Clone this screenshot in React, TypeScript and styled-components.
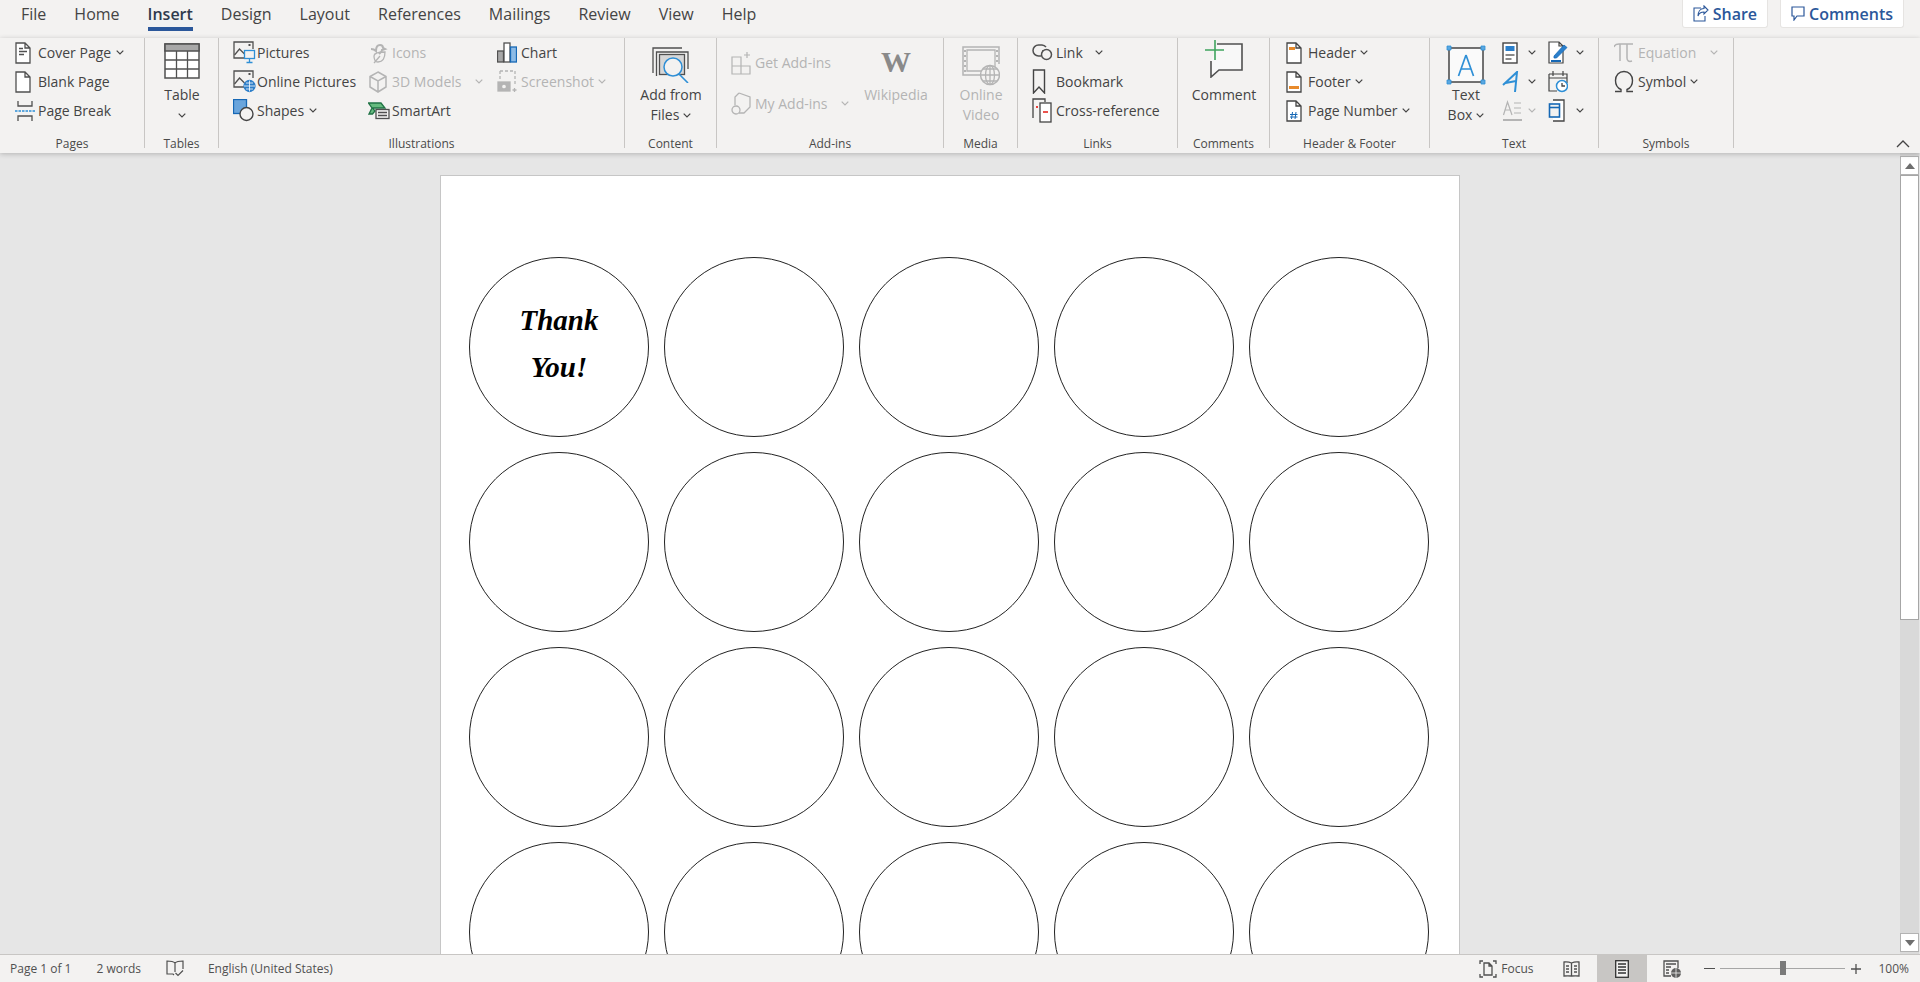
import React from "react";
import styled, { createGlobalStyle } from "styled-components";

const INK = "#505050";
const OFF = "#b4b4b4";
const BLUE = "#2e8fd6";
const DEEP = "#1668b5";

const GlobalStyle = createGlobalStyle`
  html, body {
    margin: 0;
    height: 100%;
    overflow: hidden;
    background: #e6e6e6;
  }
  body {
    font-family: "Open Sans", "Noto Sans", sans-serif;
    color: #444;
  }
`;

const Window = styled.div`
  display: flex;
  flex-direction: column;
  height: 982px;
  width: 1920px;
  overflow: hidden;
`;

const TabBar = styled.div`
  display: flex;
  height: 38px;
  flex: none;
  padding-left: 7px;
  background: #f3f2f1;
  font-size: 16px;
`;

const Tab = styled.div<{ $active?: boolean }>`
  height: 31px;
  margin: 0 14px;
  line-height: 28px;
  box-sizing: border-box;
  color: ${(p) => (p.$active ? "#2f3a4d" : "#444")};
  font-weight: ${(p) => (p.$active ? 600 : 400)};
  border-bottom: 4px solid ${(p) => (p.$active ? "#2b579a" : "transparent")};
`;

const TabActions = styled.div`
  display: flex;
  gap: 12px;
  margin-left: auto;
  margin-right: 16px;
`;

const ActionButton = styled.div`
  display: flex;
  align-items: center;
  gap: 4px;
  height: 28px;
  padding: 0 10px;
  box-sizing: border-box;
  background: #fff;
  border: 1px solid #e6e4e2;
  border-top: none;
  border-radius: 0 0 3px 3px;
  color: #2b579a;
  font-size: 16px;
  font-weight: 600;
`;

const Ribbon = styled.div`
  position: relative;
  z-index: 1;
  display: flex;
  flex: none;
  height: 115px;
  background: #f3f2f1;
  box-shadow: 0 1px 5px rgba(0, 0, 0, 0.22);
`;

const Group = styled.section<{ $w: number }>`
  display: flex;
  flex-direction: column;
  justify-content: space-between;
  flex: none;
  width: ${(p) => p.$w}px;
  box-sizing: border-box;
  background: linear-gradient(#c8c6c4, #c8c6c4) right top / 1px 110px no-repeat;
`;

const GroupBody = styled.div<{ $pad?: number }>`
  display: flex;
  justify-content: ${(p) => (p.$pad === undefined ? "center" : "flex-start")};
  padding-left: ${(p) => p.$pad ?? 0}px;
`;

const GroupLabel = styled.div`
  margin-bottom: 2px;
  padding-right: 1px;
  font-size: 12px;
  line-height: 15px;
  text-align: center;
  color: #4a4a4a;
`;

const Column = styled.div<{ $w?: number; $top?: number }>`
  display: flex;
  flex-direction: column;
  flex: none;
  width: ${(p) => (p.$w ? `${p.$w}px` : "auto")};
  padding-top: ${(p) => p.$top ?? 0}px;
`;

const Row = styled.div<{ $h?: number; $off?: boolean }>`
  display: flex;
  align-items: center;
  height: ${(p) => p.$h ?? 29}px;
  font-size: 14px;
  white-space: nowrap;
  color: ${(p) => (p.$off ? OFF : "#444")};
`;

const IconSlot = styled.span<{ $w: number }>`
  display: flex;
  align-items: center;
  flex: none;
  width: ${(p) => p.$w}px;
`;

const Caret = styled.svg<{ $gap?: number }>`
  flex: none;
  width: 8px;
  height: 5px;
  margin-left: ${(p) => p.$gap ?? 5}px;
  fill: none;
  stroke: currentColor;
  stroke-width: 1.2;
`;

const Chevron = ({ gap }: { gap?: number }) => (
  <Caret $gap={gap} viewBox="0 0 8 5">
    <path d="M.7.7 4 4l3.3-3.3" />
  </Caret>
);

const LargeButton = styled.div<{ $w: number; $off?: boolean }>`
  display: flex;
  flex-direction: column;
  align-items: center;
  flex: none;
  width: ${(p) => p.$w}px;
  font-size: 14px;
  line-height: 20px;
  color: ${(p) => (p.$off ? OFF : "#444")};
`;

const LargeIcon = styled.div<{ $top?: number }>`
  display: flex;
  justify-content: center;
  align-items: flex-start;
  height: 47px;
  box-sizing: border-box;
  padding-top: ${(p) => p.$top ?? 5}px;
`;

const LargeLine = styled.div`
  display: flex;
  align-items: center;
  justify-content: center;
  height: 20px;
  white-space: nowrap;
`;

const WikiMark = styled.div`
  font-family: "Liberation Serif", serif;
  font-weight: 700;
  font-size: 30px;
  line-height: 30px;
  color: #8a8a8a;
`;

const Workspace = styled.div`
  display: flex;
  flex: 1;
  min-height: 0;
  background: #e6e6e6;
`;

const DocArea = styled.div`
  flex: 1;
  display: flex;
  justify-content: center;
  padding-top: 22px;
  min-height: 0;
  overflow: hidden;
`;

const Page = styled.div`
  width: 1020px;
  height: 1320px;
  flex: none;
  box-sizing: border-box;
  padding: 81px 0 0 28px;
  background: #fff;
  border: 1px solid #c6c6c6;
`;

const LabelGrid = styled.div`
  display: grid;
  grid-template-columns: repeat(5, 180px);
  grid-auto-rows: 180px;
  gap: 15px;
`;

const Circle = styled.div`
  display: flex;
  flex-direction: column;
  align-items: center;
  justify-content: center;
  padding-bottom: 7px;
  box-sizing: border-box;
  border: 1px solid #222;
  border-radius: 50%;
  font-family: "Liberation Serif", serif;
  font-style: italic;
  font-weight: 700;
  font-size: 29px;
  line-height: 47px;
  color: #000;
`;

const Scrollbar = styled.div`
  display: flex;
  flex-direction: column;
  flex: none;
  width: 19px;
  margin-right: 1px;
  padding-top: 3px;
  box-sizing: border-box;
  background: linear-gradient(#d9d9d9, #d9d9d9) center / 19px 100% no-repeat;
  background-color: transparent;
`;

const ScrollEnd = styled.div`
  display: flex;
  align-items: center;
  justify-content: center;
  flex: none;
  height: 19px;
  box-sizing: border-box;
  background: #fff;
  border: 1px solid #b3b3b3;
`;

const ScrollThumb = styled.div`
  flex: none;
  height: 445px;
  box-sizing: border-box;
  background: #fff;
  border: 1px solid #a6a6a6;
`;

const ScrollGap = styled.div`
  flex: 1;
`;

const StatusBar = styled.div`
  display: flex;
  align-items: center;
  flex: none;
  height: 28px;
  box-sizing: border-box;
  border-top: 1px solid #c8c6c4;
  background: #f3f2f1;
  font-size: 12px;
  color: #505050;
`;

const StatusText = styled.span<{ $left: number }>`
  margin-left: ${(p) => p.$left}px;
  white-space: nowrap;
`;

const StatusIcon = styled.span<{ $left: number }>`
  display: flex;
  margin-left: ${(p) => p.$left}px;
`;

const StatusSpacer = styled.div`
  flex: 1;
`;

const ActiveView = styled.div`
  display: flex;
  align-items: center;
  justify-content: center;
  width: 50px;
  height: 100%;
  margin-left: 17px;
  background: #c8c6c4;
`;

const ZoomTrack = styled.div`
  position: relative;
  width: 125px;
  height: 1px;
  margin-left: 5px;
  background: #a6a6a6;
`;

const ZoomThumb = styled.div`
  position: absolute;
  left: 60px;
  top: -7px;
  width: 6px;
  height: 14px;
  background: #7a7a7a;
`;

const CollapseButton = styled.svg`
  position: absolute;
  right: 10px;
  bottom: 5px;
  width: 14px;
  height: 8px;
  fill: none;
  stroke: #444;
  stroke-width: 1.3;
`;

const Svg = styled.svg`
  display: block;
  flex: none;
  fill: none;
  stroke-width: 1.3;
`;

const Ico = ({ w, h, children }: { w: number; h: number; children: React.ReactNode }) => (
  <Svg width={w} height={h} viewBox={`0 0 ${w} ${h}`}>
    {children}
  </Svg>
);

const sheet = "M1 1H10L15 6V21H1ZM10 1V6H15";

const CoverPage = () => (
  <Ico w={16} h={22}>
    <path d={sheet} fill="#fff" stroke={INK} />
    <path d="M4 6.5h4M4 9.5h8M4 12.5h5" stroke={INK} strokeWidth="1.5" />
  </Ico>
);
const BlankPage = () => (
  <Ico w={16} h={22}>
    <path d={sheet} fill="#fff" stroke={INK} />
  </Ico>
);
const PageBreak = () => (
  <Ico w={20} h={20}>
    <path d="M3 0V5H17V0M3 20V15H17V20" stroke={INK} />
    <path d="M0 10H20" stroke={BLUE} strokeDasharray="2.5 1" />
  </Ico>
);
const PictureFrame = () => (
  <>
    <path d="M11 17H1V1H20V8" stroke={INK} />
    <path d="M1.5 14 6.5 8l5 5" stroke={INK} />
    <path d="M15.5 4h2" stroke={INK} strokeWidth="2" />
  </>
);
const Pictures = () => (
  <Ico w={24} h={24}>
    <PictureFrame />
    <rect x="11.5" y="9.5" width="10" height="8" fill="#f3f2f1" stroke={BLUE} />
    <path d="M16.5 18v3M13.5 21.5h6" stroke={BLUE} />
  </Ico>
);
const OnlinePictures = () => (
  <Ico w={24} h={24}>
    <PictureFrame />
    <circle cx="16.5" cy="16" r="5.5" fill="#2e7fc9" stroke="#2e7fc9" />
    <path d="M11 16h11M16.5 10.5v11M13 13h7M13 19h7" stroke="#fff" strokeWidth=".8" />
  </Ico>
);
const Shapes = () => (
  <Ico w={24} h={24}>
    <rect x=".5" y=".5" width="13" height="14" fill="#6aa5dc" stroke={DEEP} />
    <circle cx="13.5" cy="15" r="6.5" fill="#f3f2f1" stroke="#444" strokeWidth="1.4" />
  </Ico>
);
const IconsIcon = () => (
  <Ico w={20} h={22}>
    <path d="M3 7c2 0 4 1 5 2 0-3 1-6 4-6 2 0 3 1 3 3l2 1-3 1c0 2-2 3-3 4" stroke={OFF} strokeWidth="2" />
    <path d="M6 14c0-3 4-4 11-4 0 6-2 10-7 10-3 0-4-3-4-6ZM6 21l6-7" stroke={OFF} />
  </Ico>
);
const ThreeD = () => (
  <Ico w={20} h={22}>
    <path d="M10 1 18 5.5V16L10 21 2 16V5.5ZM2 5.5 10 10l8-4.5M10 10V21" stroke={OFF} strokeWidth="1.5" />
  </Ico>
);
const Chart = () => (
  <Ico w={20} h={21}>
    <rect x=".5" y="9" width="6" height="11" fill="#a8a8a8" stroke={INK} />
    <rect x="7" y="1" width="6" height="19" fill="#fff" stroke={INK} />
    <rect x="13.5" y="5" width="6" height="15" fill="#8cbbe6" stroke={DEEP} />
  </Ico>
);
const Screenshot = () => (
  <Ico w={20} h={23}>
    <path d="M3 1h15v15" stroke={OFF} strokeDasharray="3 2" />
    <path d="M3 1v9" stroke={OFF} strokeDasharray="3 2" />
    <rect x="1" y="12" width="12" height="9" fill="#b4b4b4" stroke={OFF} />
    <circle cx="7" cy="16.5" r="2.5" fill="#f3f2f1" stroke={OFF} />
    <path d="M15.5 20h4M17.5 18v4" stroke={OFF} />
  </Ico>
);
const SmartArt = () => (
  <Ico w={22} h={18}>
    <path d="M.5 1H13L17 6H4.5L7 9 4.5 12H1L4 6Z" fill="#66bb7f" stroke="#217346" />
    <rect x="8" y="7.5" width="13" height="9" fill="#f3f2f1" stroke={INK} />
    <path d="M10 10.5h9M10 13.5h9" stroke={INK} />
  </Ico>
);
const AddFromFiles = () => (
  <Ico w={38} h={36}>
    <path d="M1 26V1H30M4.500 29V5H36V22" stroke={INK} />
    <rect x="7.500" y="7.500" width="25" height="20" fill="#d7d7d7" stroke={INK} />
    <circle cx="21" cy="20" r="9" fill="#f3f2f1" stroke={BLUE} strokeWidth="1.5" />
    <path d="M27 27 36 36" stroke={BLUE} strokeWidth="1.6" />
  </Ico>
);
const GetAddIns = () => (
  <Ico w={20} h={24}>
    <path d="M1 6h9v9H1zM1 15h9v8H1zM10 15h9v8h-9zM13 4h6M16 1v6" stroke={OFF} strokeWidth="1.2" />
  </Ico>
);
const MyAddIns = () => (
  <Ico w={20} h={23}>
    <path d="M8 1 19 5V15L13 21H8M4 13V5L8 1" stroke={OFF} strokeWidth="1.3" />
    <circle cx="5" cy="18" r="4" stroke={OFF} strokeWidth="1.3" />
  </Ico>
);
const OnlineVideo = () => (
  <Ico w={38} h={40}>
    <path d="M20 29H1V1H37V18" stroke={OFF} strokeWidth="1.5" />
    <path d="M5 4h28v21H5z" stroke={OFF} />
    <path d="M3 4v2M3 9v2M3 14v2M3 19v2M3 24v2M35 4v2M35 9v2M35 14v2" stroke={OFF} strokeWidth="2" />
    <circle cx="28" cy="29" r="9.500" fill="#f3f2f1" stroke={OFF} strokeWidth="1.5" />
    <path d="M18.500 29h19M28 19.500v19M21 23h14M21 35h14" stroke={OFF} />
    <ellipse cx="28" cy="29" rx="4.500" ry="9.500" stroke={OFF} />
  </Ico>
);
const LinkIcon = () => (
  <Ico w={21} h={17}>
    <path d="M9 12H6.500a5.500 5.500 0 0 1 0-11H10a5.500 5.500 0 0 1 4 2" stroke={INK} strokeWidth="1.5" />
    <circle cx="14.500" cy="10.500" r="5" stroke={INK} strokeWidth="1.5" />
    <path d="M10 7h1" stroke={INK} />
  </Ico>
);
const Bookmark = () => (
  <Ico w={14} h={25}>
    <path d="M1.500 1H12.500V24L7 18 1.500 24Z" stroke="#444" strokeWidth="1.4" />
  </Ico>
);
const CrossRef = () => (
  <Ico w={20} h={25}>
    <path d="M1 20V1H13V4" stroke="#444" />
    <rect x="8" y="5" width="11" height="19" fill="#fff" stroke="#444" />
    <path d="M11 14h5" stroke="#e8403a" strokeWidth="1.8" />
    <path d="M4 9h2" stroke="#e8403a" strokeWidth="1.8" />
  </Ico>
);
const CommentIcon = () => (
  <Ico w={38} h={38}>
    <path d="M12 4H37V30H14L6 37V21" fill="#f8f8f8" stroke={INK} strokeWidth="1.6" />
    <path d="M0 10H19M10 0V20" stroke="#3fa45e" strokeWidth="1.6" />
  </Ico>
);
const HeaderIcon = () => (
  <Ico w={16} h={22}>
    <path d={sheet} fill="#fff" stroke="#444" />
    <rect x="3" y="5" width="6" height="3" fill="#e88a2b" />
  </Ico>
);
const FooterIcon = () => (
  <Ico w={16} h={22}>
    <path d={sheet} fill="#fff" stroke="#444" />
    <rect x="3" y="15" width="10" height="3" fill="#e88a2b" />
  </Ico>
);
const PageNumberIcon = () => (
  <Ico w={16} h={22}>
    <path d={sheet} fill="#fff" stroke="#444" />
    <path d="M6.500 12 5.500 19M10 12 9 19M4 14.500h7.500M4 17h7.500" stroke={DEEP} strokeWidth="1" />
  </Ico>
);
const TextBoxIcon = () => (
  <Ico w={40} h={40}>
    <rect x="3" y="3" width="34" height="34" fill="#fafafa" stroke="#444" strokeWidth="1.5" />
    <path d="M20 10 12.500 31M20 10l7.500 21M15 24h10" stroke={BLUE} strokeWidth="1.7" />
    <path d="M1 1h4v4H1zM35 1h4v4h-4zM1 35h4v4H1zM35 35h4v4h-4z" fill="#5aa7e0" stroke={BLUE} strokeWidth=".8" />
  </Ico>
);
const QuickParts = () => (
  <Ico w={16} h={22}>
    <rect x="1" y="1" width="14" height="20" fill="#fff" stroke="#444" strokeWidth="1.4" />
    <rect x="3.500" y="4" width="9" height="5" fill="#2a7fcb" />
    <path d="M3.500 12h9v2h-9zM3.500 16h6v2h-6z" fill="#8a8a8a" />
  </Ico>
);
const WordArt = () => (
  <Ico w={18} h={22}>
    <path d="M1 14 15 1 13 21M3.500 12 14 10" stroke={BLUE} strokeWidth="2" />
  </Ico>
);
const DropCap = () => (
  <Ico w={21} h={24}>
    <path d="M1.500 16 5.500 3 10 16M3 11h5M12 4h7M12 9h7M12 14h7" stroke={OFF} strokeWidth="1.2" />
    <path d="M1 21h19" stroke={OFF} strokeWidth="2" />
  </Ico>
);
const Signature = () => (
  <Ico w={20} h={23}>
    <path d="M1 1H11L15 5V22H1ZM11 1V5H15" fill="#fff" stroke="#444" strokeWidth="1.2" />
    <path d="M6 15 16 4l3 2.500L8.500 17H6Z" fill="#2a7fcb" stroke={DEEP} strokeWidth=".8" />
    <path d="M3 20h10" stroke={DEEP} strokeWidth="2" />
  </Ico>
);
const DateTime = () => (
  <Ico w={20} h={23}>
    <path d="M1 4H19V13M9 21H1V4M1 8H19M5 1V6M15 1V6" stroke="#444" strokeWidth="1.2" />
    <circle cx="14" cy="16" r="5.500" fill="#fff" stroke={BLUE} strokeWidth="1.500" />
    <path d="M14 13v3h3" stroke="#444" />
  </Ico>
);
const ObjectIcon = () => (
  <Ico w={18} h={23}>
    <path d="M5 1H16V22H5" fill="#fff" stroke="#444" strokeWidth="1.3" />
    <rect x="1.500" y="5" width="10" height="13" fill="#f3f2f1" stroke={DEEP} strokeWidth="1.600" />
    <path d="M1.500 8.500h10" stroke={DEEP} strokeWidth="1.600" />
  </Ico>
);
const EquationIcon = () => (
  <Ico w={19} h={21}>
    <path d="M0 5C1 2 3 2 5 2H19M6 2V19M13 2V16C13 19 15 20 18 19" stroke={OFF} strokeWidth="1.500" />
  </Ico>
);
const SymbolIcon = () => (
  <Ico w={20} h={23}>
    <path d="M1 21.500H7V19.500C3.500 18 1.500 14.500 1.500 10.500 1.500 5 5 1.500 10 1.500S18.500 5 18.500 10.500C18.500 14.500 16.500 18 13 19.500V21.500H19" stroke="#444" strokeWidth="1.400" />
  </Ico>
);
const ShareIcon = () => (
  <Ico w={16} h={17}>
    <path d="M11 1 15 5 11 9V7C8 7 6 8 5 11 5 7 7 3.500 11 3.500ZM8 3H1V16H12V11" stroke="#2b579a" strokeWidth="1.100" />
  </Ico>
);
const CommentsIcon = () => (
  <Ico w={14} h={15}>
    <path d="M1 1H13V10H6L3 14V10H1Z" stroke="#2b579a" strokeWidth="1.200" />
  </Ico>
);
const Proofing = () => (
  <Ico w={18} h={17}>
    <path d="M9 3C7 1 4 1 1 1V14H7L8 15M9 3C11 1 14 1 17 1V9M9 3V12" stroke={INK} strokeWidth="1.200" />
    <path d="M9.500 13 12 15.500 17 10.500" stroke={INK} strokeWidth="1.200" />
  </Ico>
);
const FocusIcon = () => (
  <Ico w={18} h={18}>
    <path d="M1 4V1H4M14 1H17V4M1 14V17H4M14 17H17V14" stroke={INK} />
    <path d="M5 3H10L13 6V15H5ZM10 3V6H13" stroke={INK} />
  </Ico>
);
const ReadView = () => (
  <Ico w={17} h={16}>
    <path d="M8.500 2C6 .8 3 .8 1 1V15C3 14.800 6 14.800 8.500 15 11 14.800 14 14.800 16 15V1C14 .8 11 .8 8.500 2ZM8.500 2V15" stroke={INK} />
    <path d="M3 5h3M3 8h3M3 11h3M11 5h3M11 8h3M11 11h3" stroke={INK} />
  </Ico>
);
const PrintView = () => (
  <Ico w={14} h={18}>
    <rect x=".7" y=".7" width="12.600" height="16.600" fill="#f3f2f1" stroke="#333" strokeWidth="1.300" />
    <path d="M3 4h8M3 7h8M3 10h8M3 13h8" stroke="#333" strokeWidth="1.300" />
  </Ico>
);
const WebView = () => (
  <Ico w={18} h={18}>
    <path d="M8 16H1V1H15V8" stroke={INK} />
    <path d="M3 4H13M3 7H8M3 10H6M3 13H6" stroke={INK} />
    <circle cx="13" cy="13" r="5" fill="#5f5f5f" />
    <path d="M8 13H18M13 8V18" stroke="#f3f2f1" strokeWidth=".8" />
  </Ico>
);

const SmallButton = ({
  icon,
  label,
  slot = 24,
  caret,
  off,
  h,
}: {
  icon: React.ReactNode;
  label?: string;
  slot?: number;
  caret?: number;
  off?: boolean;
  h?: number;
}) => (
  <Row $off={off} $h={h}>
    <IconSlot $w={slot}>{icon}</IconSlot>
    {label}
    {caret !== undefined && <Chevron gap={caret} />}
  </Row>
);

const tabs = ["File", "Home", "Insert", "Design", "Layout", "References", "Mailings", "Review", "View", "Help"];

export default function App() {
  return (
    <Window>
      <GlobalStyle />
      <TabBar>
        {tabs.map((t) => (
          <Tab key={t} $active={t === "Insert"}>
            {t}
          </Tab>
        ))}
        <TabActions>
          <ActionButton>
            <ShareIcon />
            Share
          </ActionButton>
          <ActionButton>
            <CommentsIcon />
            Comments
          </ActionButton>
        </TabActions>
      </TabBar>

      <Ribbon>
        <Group $w={145}>
          <GroupBody $pad={15}>
            <Column>
              <SmallButton icon={<CoverPage />} label="Cover Page" slot={23} caret={5} />
              <SmallButton icon={<BlankPage />} label="Blank Page" slot={23} />
              <SmallButton icon={<PageBreak />} label="Page Break" slot={23} />
            </Column>
          </GroupBody>
          <GroupLabel>Pages</GroupLabel>
        </Group>

        <Group $w={74}>
          <GroupBody>
            <LargeButton $w={73}>
              <LargeIcon>
                <Ico w={36} h={36}>
                  <rect x="1" y="1" width="34" height="34" fill="#fff" stroke={INK} strokeWidth="1.5" />
                  <rect x="1" y="1" width="34" height="7" fill="#a8a8a8" stroke={INK} strokeWidth="1.5" />
                  <path d="M12.500 8V35M23.500 8V35M1 17H35M1 26H35" stroke={INK} />
                </Ico>
              </LargeIcon>
              <LargeLine>Table</LargeLine>
              <LargeLine>
                <Chevron gap={0} />
              </LargeLine>
            </LargeButton>
          </GroupBody>
          <GroupLabel>Tables</GroupLabel>
        </Group>

        <Group $w={406}>
          <GroupBody $pad={14}>
            <Column $w={135}>
              <SmallButton icon={<Pictures />} label="Pictures" />
              <SmallButton icon={<OnlinePictures />} label="Online Pictures" />
              <SmallButton icon={<Shapes />} label="Shapes" caret={5} />
            </Column>
            <Column $w={129}>
              <SmallButton icon={<IconsIcon />} label="Icons" off />
              <SmallButton icon={<ThreeD />} label="3D Models" caret={14} off />
              <SmallButton icon={<SmartArt />} label="SmartArt" />
            </Column>
            <Column>
              <SmallButton icon={<Chart />} label="Chart" />
              <SmallButton icon={<Screenshot />} label="Screenshot" caret={4} off />
            </Column>
          </GroupBody>
          <GroupLabel>Illustrations</GroupLabel>
        </Group>

        <Group $w={92}>
          <GroupBody>
            <LargeButton $w={91}>
              <LargeIcon $top={9}>
                <AddFromFiles />
              </LargeIcon>
              <LargeLine>Add from</LargeLine>
              <LargeLine>
                Files
                <Chevron gap={4} />
              </LargeLine>
            </LargeButton>
          </GroupBody>
          <GroupLabel>Content</GroupLabel>
        </Group>

        <Group $w={227}>
          <GroupBody $pad={14}>
            <Column $w={127} $top={4}>
              <SmallButton icon={<GetAddIns />} label="Get Add-ins" h={41} off />
              <SmallButton icon={<MyAddIns />} label="My Add-ins" caret={13} h={41} off />
            </Column>
            <LargeButton $w={76} $off>
              <LargeIcon $top={9}>
                <WikiMark>W</WikiMark>
              </LargeIcon>
              <LargeLine>Wikipedia</LargeLine>
            </LargeButton>
          </GroupBody>
          <GroupLabel>Add-ins</GroupLabel>
        </Group>

        <Group $w={74}>
          <GroupBody>
            <LargeButton $w={73} $off>
              <LargeIcon $top={8}>
                <OnlineVideo />
              </LargeIcon>
              <LargeLine>Online</LargeLine>
              <LargeLine>Video</LargeLine>
            </LargeButton>
          </GroupBody>
          <GroupLabel>Media</GroupLabel>
        </Group>

        <Group $w={160}>
          <GroupBody $pad={14}>
            <Column>
              <SmallButton icon={<LinkIcon />} label="Link" caret={12} />
              <SmallButton icon={<Bookmark />} label="Bookmark" />
              <SmallButton icon={<CrossRef />} label="Cross-reference" />
            </Column>
          </GroupBody>
          <GroupLabel>Links</GroupLabel>
        </Group>

        <Group $w={92}>
          <GroupBody>
            <LargeButton $w={91}>
              <LargeIcon $top={2}>
                <CommentIcon />
              </LargeIcon>
              <LargeLine>Comment</LargeLine>
            </LargeButton>
          </GroupBody>
          <GroupLabel>Comments</GroupLabel>
        </Group>

        <Group $w={160}>
          <GroupBody $pad={16}>
            <Column>
              <SmallButton icon={<HeaderIcon />} label="Header" slot={22} caret={4} />
              <SmallButton icon={<FooterIcon />} label="Footer" slot={22} caret={4} />
              <SmallButton icon={<PageNumberIcon />} label="Page Number" slot={22} caret={4} />
            </Column>
          </GroupBody>
          <GroupLabel>Header &amp; Footer</GroupLabel>
        </Group>

        <Group $w={169}>
          <GroupBody $pad={0}>
            <LargeButton $w={72}>
              <LargeIcon $top={7}>
                <TextBoxIcon />
              </LargeIcon>
              <LargeLine>Text</LargeLine>
              <LargeLine>
                Box
                <Chevron gap={4} />
              </LargeLine>
            </LargeButton>
            <Column $w={46}>
              <SmallButton icon={<QuickParts />} slot={24} caret={2} />
              <SmallButton icon={<WordArt />} slot={24} caret={2} />
              <SmallButton icon={<DropCap />} slot={24} caret={2} off />
            </Column>
            <Column>
              <SmallButton icon={<Signature />} slot={28} caret={0} />
              <SmallButton icon={<DateTime />} slot={28} />
              <SmallButton icon={<ObjectIcon />} slot={28} caret={0} />
            </Column>
          </GroupBody>
          <GroupLabel>Text</GroupLabel>
        </Group>

        <Group $w={135}>
          <GroupBody $pad={15}>
            <Column>
              <SmallButton icon={<EquationIcon />} label="Equation" caret={14} off />
              <SmallButton icon={<SymbolIcon />} label="Symbol" caret={4} />
            </Column>
          </GroupBody>
          <GroupLabel>Symbols</GroupLabel>
        </Group>

        <CollapseButton viewBox="0 0 14 8">
          <path d="M1 7 7 1l6 6" />
        </CollapseButton>
      </Ribbon>

      <Workspace>
        <DocArea>
          <Page>
            <LabelGrid>
              {Array.from({ length: 25 }, (_, i) => (
                <Circle key={i}>
                  {i === 0 && (
                    <>
                      <span>Thank</span>
                      <span>You!</span>
                    </>
                  )}
                </Circle>
              ))}
            </LabelGrid>
          </Page>
        </DocArea>
        <Scrollbar>
          <ScrollEnd>
            <Ico w={10} h={6}>
              <path d="M5 0 10 6H0Z" fill="#6e6e6e" />
            </Ico>
          </ScrollEnd>
          <ScrollThumb />
          <ScrollGap />
          <ScrollEnd>
            <Ico w={10} h={6}>
              <path d="M0 0H10L5 6Z" fill="#6e6e6e" />
            </Ico>
          </ScrollEnd>
          <ScrollGap style={{ flex: "none", height: 2 }} />
        </Scrollbar>
      </Workspace>

      <StatusBar>
        <StatusText $left={10}>Page 1 of 1</StatusText>
        <StatusText $left={25}>2 words</StatusText>
        <StatusIcon $left={25}>
          <Proofing />
        </StatusIcon>
        <StatusText $left={24}>English (United States)</StatusText>
        <StatusSpacer />
        <StatusIcon $left={0}>
          <FocusIcon />
        </StatusIcon>
        <StatusText $left={4}>Focus</StatusText>
        <StatusIcon $left={30}>
          <ReadView />
        </StatusIcon>
        <ActiveView>
          <PrintView />
        </ActiveView>
        <StatusIcon $left={16}>
          <WebView />
        </StatusIcon>
        <StatusIcon $left={23}>
          <Ico w={11} h={1}>
            <path d="M0 .5H11" stroke={INK} />
          </Ico>
        </StatusIcon>
        <ZoomTrack>
          <ZoomThumb />
        </ZoomTrack>
        <StatusIcon $left={6}>
          <Ico w={10} h={10}>
            <path d="M0 5H10M5 0V10" stroke={INK} />
          </Ico>
        </StatusIcon>
        <StatusText $left={17}>100%</StatusText>
        <StatusIcon $left={11}>
          <span />
        </StatusIcon>
      </StatusBar>
    </Window>
  );
}
